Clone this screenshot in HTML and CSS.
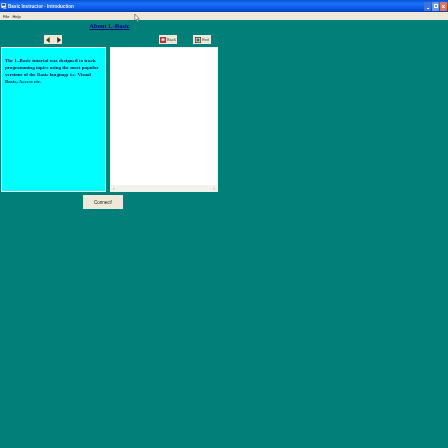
FILE: index.html
```html
<!DOCTYPE html>
<html lang="en">
<head>
<meta charset="utf-8">
<title>Basic Instructor - Introduction</title>
<link rel="stylesheet" href="styles.css">
</head>
<body>
<div class="window">
  <header class="titlebar">
    <svg class="app-icon" viewBox="0 0 8 8"><rect x="0.5" y="0.5" width="6" height="6" fill="#fff"/><rect x="1.5" y="1.5" width="4" height="2" fill="#223"/><rect x="3" y="5" width="4" height="3" fill="#9ab"/></svg>
    <span class="title-text">Basic Instructor - Introduction</span>
    <div class="win-controls">
      <span class="win-btn win-min"><i class="min-mark"></i></span>
      <span class="win-btn win-max"><i class="max-mark"></i></span>
      <span class="win-btn win-close">x</span>
    </div>
  </header>
  <nav class="menubar"><span>File</span><span>Help</span></nav>
  <main class="content">
    <h1 class="heading">About L-Basic</h1>
    <div class="toolbar">
      <div class="tool-left">
        <button class="tool nav-tool"><svg viewBox="0 0 8 8"><path d="M0 4 5 0v8z" fill="#4a4415"/></svg></button><button class="tool nav-tool"><svg viewBox="0 0 8 8"><path d="M8 4 3 0v8z" fill="#2c2a15"/></svg></button>
      </div>
      <button class="tool text-tool tool-b"><svg viewBox="0 0 8 8"><rect width="8" height="8" fill="#b3323c"/><rect x="2" y="2" width="4" height="3" fill="#eee"/></svg><span>Back</span></button>
      <button class="tool text-tool tool-e"><svg viewBox="0 0 8 8"><rect x="0.500" y="0.500" width="7" height="7" fill="#fff" stroke="#333"/><rect x="2" y="2" width="4" height="4" fill="#555"/></svg><span>Exit</span></button>
    </div>
    <div class="panels">
      <section class="panel panel-info">
        <p>The L-Basic tutorial was designed to teach programming topics using the most popular versions of the Basic language i.e. Visual Basic, Access etc.</p>
      </section>
      <section class="panel panel-view">
        <div class="h-scroll"><span>‹</span><span>›</span></div>
      </section>
    </div>
    <div class="actions"><button class="connect">Connect!</button></div>
  </main>
  <svg class="cursor" viewBox="0 0 8 12"><path d="M1 0v9l2-2 1.500 3.500 1.500-.6L4.500 6.500H7z" fill="#fff" stroke="#333" stroke-width="0.7"/></svg>
</div>
</body>
</html>
```
FILE: styles.css
```css
* { box-sizing: border-box; }
html, body { margin: 0; padding: 0; }
body { width: 448px; height: 448px; overflow: hidden; background: #017f78; }
.window { position: relative; width: 448px; height: 448px; display: flex; flex-direction: column; background: #017f78; filter: blur(0.4px); font-family: "Liberation Sans", Arial, sans-serif; }
.titlebar { height: 12px; display: flex; align-items: center; gap: 1px; padding-left: 1px; color: #e8effa; font-size: 4.600px; font-weight: 700; background: linear-gradient(#0a50d8, #1a72f6 30%, #0a5aea 70%, #0a3ab8); }
.app-icon { width: 6px; height: 8px; flex: none; }
.title-text { white-space: nowrap; }
.win-controls { margin-left: auto; display: flex; gap: 1px; padding-right: 1px; }
.win-btn { width: 7px; height: 9px; border-radius: 1px; display: flex; align-items: center; justify-content: center; color: #fff; font-size: 6px; line-height: 1; }
.win-min { background: #3f72dc; align-items: flex-end; padding-bottom: 2px; }
.win-max { background: #6e9be6; }
.win-close { background: #d8765c; }
.min-mark { width: 2px; height: 1px; background: #fff; }
.max-mark { width: 4px; height: 4px; border: 1px solid #fff; }
.menubar { height: 8px; display: flex; align-items: center; gap: 3px; padding-left: 3px; background: #ece9d8; color: #222; font-size: 4px; }
.content { flex: 1; display: flex; flex-direction: column; padding-left: 1px; }
.heading { width: 217px; margin: 1px 0 0; height: 14px; text-align: center; color: #00008b; font: 700 6.500px/10px "Liberation Serif", serif; text-decoration: underline; }
.toolbar { height: 12px; width: 217px; display: flex; align-items: flex-start; }
.tool-left { display: flex; margin-left: 43px; }
.tool { padding: 0; border: 0; background: #ece9d8; height: 9px; display: flex; align-items: center; justify-content: center; gap: 1px; font: 4px "Liberation Sans", sans-serif; color: #333; }
.tool svg { width: 6px; height: 6px; }
.nav-tool { width: 9px; }
.text-tool { width: 18px; }
.tool-b { margin-left: 97px; }
.tool-e { margin-left: 16px; }
.panels { display: flex; gap: 4px; height: 145px; }
.panel { height: 145px; border: 1px solid #e7f3ef; }
.panel-info { width: 105px; background: #00ffff; padding: 9px 2px 0 3px; }
.panel-info p { margin: 0; color: #001040; font: 700 5px/7px "Liberation Serif", serif; }
.panel-view { width: 108px; background: #fff; display: flex; flex-direction: column; justify-content: flex-end; }
.h-scroll { height: 6px; background: #f2f1ea; display: flex; justify-content: space-between; padding: 0 2px; color: #99a; font-size: 5px; line-height: 6px; }
.actions { width: 217px; display: flex; padding: 3px 0 0 82px; }
.connect { width: 40px; height: 14px; padding: 0; border: 0; background: #ece9d8; color: #222; font: 4.500px "Liberation Sans", sans-serif; }
.cursor { position: absolute; left: 134px; top: 14px; width: 6px; height: 9px; }
```
